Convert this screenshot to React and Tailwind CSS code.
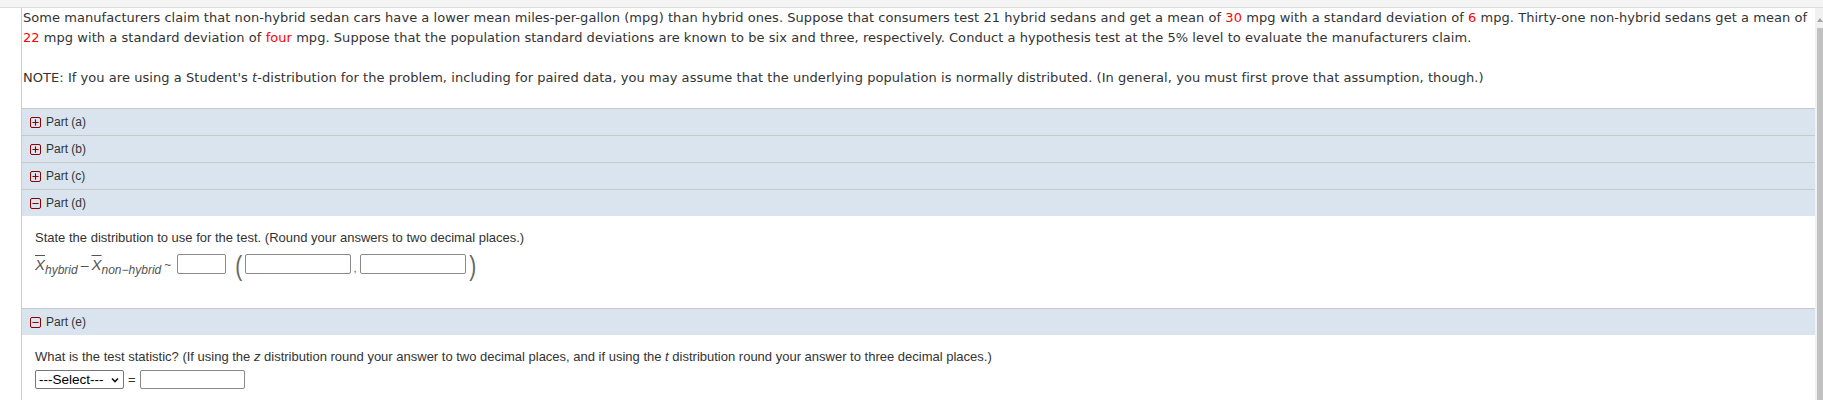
import { Plus, Minus } from 'lucide-react'

const parts = ['a', 'b', 'c']

function PartHeader({ label, open }) {
  return (
    <div className="flex items-center gap-[5px] h-[27px] pl-[8px] border-t border-[#c8c8c8] bg-[#d9e4ee] font-['Liberation_Sans',Arial,sans-serif] text-[12px] text-[#333]">
      <span className="w-[11px] h-[11px] border-[1.5px] border-[#8b0000] rounded-[2px] flex items-center justify-center text-[#8b0000]">
        {open ? <Minus size={9} strokeWidth={3} /> : <Plus size={9} strokeWidth={3} />}
      </span>
      <span>Part ({label})</span>
    </div>
  )
}

function XBar({ sub }) {
  return (
    <span className="inline-flex items-baseline">
      <span className="overline decoration-[1px] text-[15px] italic">X</span>
      <span className="italic text-[12px] relative top-[4px]">{sub}</span>
    </span>
  )
}

export default function App() {
  const red = 'text-[#ff0000]'
  return (
    <div className="w-[1823px] h-[400px] overflow-hidden bg-white flex flex-col">
      {/* top strip */}
      <div className="h-[8px] bg-[#f4f4f4] border-b border-[#dedede] shrink-0" />

      <div className="flex flex-1 min-h-0">
        <div className="w-[21px] shrink-0" />

        <div className="w-[1794px] border-l border-[#cccccc] flex flex-col">
          {/* question */}
          <div className="pl-[1px] pb-[20px] font-['DejaVu_Sans',Verdana,sans-serif] text-[13px] leading-[20px] text-[#333] tracking-[0.05px]">
            <p>
              Some manufacturers claim that non-hybrid sedan cars have a lower mean miles-per-gallon (mpg) than hybrid ones. Suppose that consumers test 21 hybrid sedans and get a mean of <span className={red}>30</span> mpg with a standard deviation of <span className={red}>6</span> mpg. Thirty-one non-hybrid sedans get a mean of <span className={red}>22</span> mpg with a standard deviation of <span className={red}>four</span> mpg. Suppose that the population standard deviations are known to be six and three, respectively. Conduct a hypothesis test at the 5% level to evaluate the manufacturers claim.
            </p>
            <p className="mt-[20px]">
              NOTE: If you are using a Student's <i>t</i>-distribution for the problem, including for paired data, you may assume that the underlying population is normally distributed. (In general, you must first prove that assumption, though.)
            </p>
          </div>

          {parts.map((p) => (
            <PartHeader key={p} label={p} />
          ))}

          <PartHeader label="d" open />
          <div className="h-[92px] pl-[13px] pt-[14px] font-['Liberation_Sans',Arial,sans-serif] text-[13px] leading-[16px] text-[#333]">
            <p>State the distribution to use for the test. (Round your answers to two decimal places.)</p>
            <div className="flex items-center mt-[8px] h-[20px]">
              <span className="flex items-center text-[#555] font-['Liberation_Sans',Arial,sans-serif] mt-[2px]">
                <XBar sub="hybrid" />
                <span className="mx-[3px] text-[14px]">–</span>
                <XBar sub="non−hybrid" />
                <span className="ml-[3px] text-[12px]">~</span>
              </span>
              <input className="ml-[6px] w-[49px] h-[20px] border border-[#8a8a8a] rounded-[2px] bg-white" />
              <span className="ml-[8px] text-[28px] leading-[20px] font-light text-[#666] scale-x-75 relative top-[2px]">(</span>
              <input className="ml-[1px] w-[106px] h-[20px] border border-[#8a8a8a] rounded-[2px] bg-white" />
              <span className="mx-[3px] text-[11px] text-[#555] relative top-[4px]">,</span>
              <input className="w-[106px] h-[20px] border border-[#8a8a8a] rounded-[2px] bg-white" />
              <span className="ml-[2px] text-[28px] leading-[20px] font-light text-[#666] scale-x-75 relative top-[2px]">)</span>
            </div>
          </div>

          <PartHeader label="e" open />
          <div className="pl-[13px] pt-[14px] font-['Liberation_Sans',Arial,sans-serif] text-[13px] leading-[16px] text-[#333]">
            <p>
              What is the test statistic? (If using the <i>z</i> distribution round your answer to two decimal places, and if using the <i>t</i> distribution round your answer to three decimal places.)
            </p>
            <div className="flex items-center mt-[5px] gap-[4px]">
              <div className="w-[89px] h-[19px] border border-[#767676] rounded-[2px] bg-white flex items-center justify-between pl-[3px] pr-[3px] text-[13.5px] text-black">
                <span>---Select---</span>
                <svg width="10" height="10" viewBox="0 0 10 10">
                  <path d="M2 3.5 L5 6.5 L8 3.5" fill="none" stroke="#111" strokeWidth="1.6" />
                </svg>
              </div>
              <span className="text-[13px]">=</span>
              <input className="w-[105px] h-[19px] border border-[#8a8a8a] rounded-[2px] bg-white" />
            </div>
          </div>
        </div>

        {/* scrollbar */}
        <div className="w-[8px] shrink-0 bg-[#f1f1f1] flex">
          <div className="w-[2px]" />
          <div className="flex-1 flex flex-col">
            <div className="h-[20px] flex items-start justify-center pt-[10px]">
              <svg width="6" height="4" viewBox="0 0 6 4">
                <path d="M0 4 L3 0 L6 4 Z" fill="#a3a3a3" />
              </svg>
            </div>
            <div className="flex-1 bg-[#c1c1c1]" />
          </div>
        </div>
      </div>
    </div>
  )
}
